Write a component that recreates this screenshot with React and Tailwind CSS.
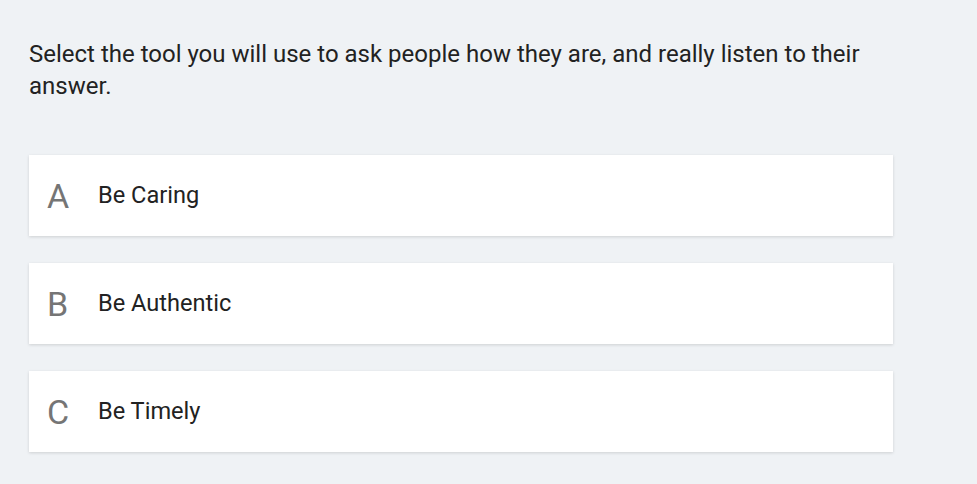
const options = [
  { letter: "A", text: "Be Caring" },
  { letter: "B", text: "Be Authentic" },
  { letter: "C", text: "Be Timely" },
];

export default function App() {
  return (
    <div className="min-h-screen bg-[#eff2f5] pl-[29px] pt-[38px] font-['Roboto',sans-serif]">
      <p className="w-[864px] text-[24px] leading-[32px] text-[#222]">
        Select the tool you will use to ask people how they are, and really listen to their answer.
      </p>
      <div className="mt-[53px] flex flex-col gap-[27px]">
        {options.map((o) => (
          <div
            key={o.letter}
            className="flex h-[81px] w-[864px] items-center bg-white pl-[18px] shadow-[0_1px_3px_rgba(0,0,0,0.14)]"
          >
            <span className="w-[51px] text-[34px] leading-none text-[#757575]">{o.letter}</span>
            <span className="text-[23.6px] text-[#222]">{o.text}</span>
          </div>
        ))}
      </div>
    </div>
  );
}
